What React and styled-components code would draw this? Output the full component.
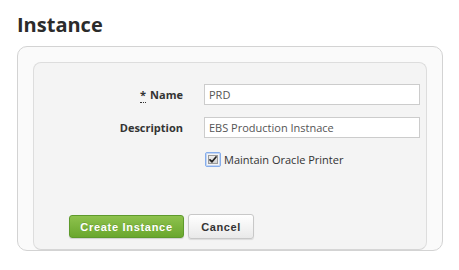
import React from "react";
import styled, { createGlobalStyle } from "styled-components";

const Global = createGlobalStyle`
  html, body { margin: 0; padding: 0; background: #ffffff; }
  body { font-family: "Open Sans", "Liberation Sans", sans-serif; color: #333; }
`;

const Page = styled.div`
  width: 459px;
  height: 270px;
  padding: 12px 16px 0 17px;
  box-sizing: border-box;
`;

const Title = styled.h1`
  margin: 0 0 9px 0;
  font-family: "Open Sans", sans-serif;
  font-weight: 700;
  font-size: 20px;
  line-height: 25px;
  color: #2b2b2b;
`;

const OuterPanel = styled.div`
  width: 426px;
  height: 205px;
  box-sizing: border-box;
  border: 1px solid #d3d3d3;
  border-radius: 10px;
  background: #fafafa;
  padding: 15px 15px 0 15px;
  display: flex;
`;

const InnerPanel = styled.div`
  flex: 1;
  box-sizing: border-box;
  border: 1px solid #dddddd;
  border-bottom-color: #d6d6d6;
  border-radius: 8px;
  background: #f4f4f4;
  padding: 21px 6px 10px 35px;
  display: flex;
  flex-direction: column;
`;

const Form = styled.div`
  display: grid;
  grid-template-columns: 114px 216px;
  column-gap: 21px;
  row-gap: 12px;
  align-items: center;
`;

const Label = styled.label`
  text-align: right;
  font-weight: 700;
  font-size: 11px;
  color: #333;
`;

const Req = styled.abbr`
  text-decoration: none;
  border-bottom: 1px dotted #333;
  margin-right: 4px;
  font-weight: 700;
`;

const Input = styled.input`
  box-sizing: border-box;
  width: 216px;
  height: 21px;
  border: 1px solid #cccccc;
  background: #ffffff;
  padding: 0 4px;
  font-family: "Open Sans", sans-serif;
  font-size: 11px;
  color: #555;
  outline: none;
`;

const CheckRow = styled.div`
  grid-column: 2;
  display: flex;
  align-items: center;
  gap: 3px;
  margin-top: 2px;
  margin-left: 1px;
  font-size: 11px;
  color: #333;
`;

const CheckRing = styled.span`
  box-sizing: border-box;
  width: 16px;
  height: 15px;
  border: 1px solid #86adeb;
  border-radius: 2px;
  box-shadow: inset 0 0 0 1px #c3d6f5;
  padding: 2px;
  display: flex;
`;

const CheckBox = styled.span`
  flex: 1;
  box-sizing: border-box;
  border: 1px solid #9a9a9a;
  background: linear-gradient(#ececec, #d2d2d2);
  display: flex;
  align-items: center;
  justify-content: center;
`;

const Buttons = styled.div`
  margin-top: auto;
  display: flex;
  align-items: center;
  gap: 4px;
`;

const Button = styled.button`
  box-sizing: border-box;
  height: ${(p) => (p.$primary ? "23px" : "25px")};
  padding: 0;
  white-space: nowrap;
  font-family: "Liberation Sans", Arial, sans-serif;
  font-weight: 700;
  font-size: 11px;
  letter-spacing: ${(p) => (p.$primary ? "0.7px" : "0.6px")};
  border-radius: 3px;
  cursor: pointer;
  color: ${(p) => (p.$primary ? "#ffffff" : "#333333")};
  border: 1px solid ${(p) => (p.$primary ? "#5e9a2c" : "#c8c8c8")};
  background: ${(p) =>
    p.$primary
      ? "linear-gradient(#8ec24d, #6aa72e)"
      : "linear-gradient(#ffffff, #e9e9e9)"};
  box-shadow: ${(p) =>
    p.$primary ? "0 1px 1px rgba(0,0,0,0.15)" : "0 1px 1px rgba(0,0,0,0.1)"};
  text-shadow: ${(p) => (p.$primary ? "0 -1px 0 rgba(0,0,0,0.12)" : "none")};
  width: ${(p) => (p.$primary ? "115px" : "66px")};
`;

export default function App() {
  return (
    <>
      <Global />
      <Page>
        <Title>Instance</Title>
        <OuterPanel>
          <InnerPanel>
            <Form>
              <Label htmlFor="name">
                <Req title="required">*</Req>Name
              </Label>
              <Input id="name" defaultValue="PRD" />
              <Label htmlFor="desc">Description</Label>
              <Input id="desc" defaultValue="EBS Production Instnace" />
              <CheckRow>
                <CheckRing>
                  <CheckBox>
                    <svg width="8" height="7" viewBox="0 0 8 7">
                      <path
                        d="M1 3.8 L3 5.8 L7 1"
                        fill="none"
                        stroke="#222"
                        strokeWidth="1.7"
                        strokeLinecap="round"
                        strokeLinejoin="round"
                      />
                    </svg>
                  </CheckBox>
                </CheckRing>
                <span>Maintain Oracle Printer</span>
              </CheckRow>
            </Form>
            <Buttons>
              <Button $primary>Create Instance</Button>
              <Button>Cancel</Button>
            </Buttons>
          </InnerPanel>
        </OuterPanel>
      </Page>
    </>
  );
}
